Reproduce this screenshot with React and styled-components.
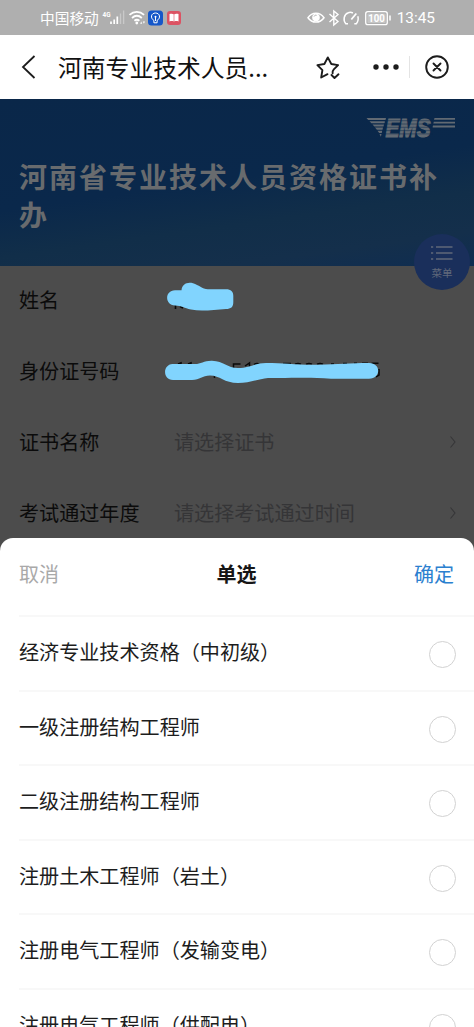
import React, { useState } from 'react';
import styled, { createGlobalStyle } from 'styled-components';

const GlobalStyle = createGlobalStyle`
  * {
    box-sizing: border-box;
  }
  body {
    margin: 0;
    background: #fff;
    font-family: "Noto Sans CJK SC", "Noto Sans", sans-serif;
  }
`;

const Screen = styled.div`
  width: 474px;
  height: 1027px;
  overflow: hidden;
  display: flex;
  flex-direction: column;
  background: #4c4c4c;
`;

const StatusBar = styled.div`
  height: 35px;
  flex: none;
  display: flex;
  align-items: center;
  justify-content: space-between;
  padding: 1px 39px 0 40px;
  background: #afafaf;
  color: #fff;
`;

const StatusGroup = styled.div`
  display: flex;
  align-items: center;

  svg {
    display: block;
  }
`;

const Carrier = styled.span`
  font-size: 14.7px;
  line-height: 20px;
`;

const Clock = styled.span`
  margin-left: 6px;
  font-family: Roboto, sans-serif;
  font-size: 15.4px;
  line-height: 20px;
`;

const NavBar = styled.div`
  height: 64px;
  flex: none;
  display: flex;
  align-items: center;
  padding: 0 25px 0 21px;
  background: #fff;
  color: #1c1c1c;
`;

const NavTitle = styled.div`
  flex: 1;
  margin-left: 22px;
  font-size: 23.8px;
  line-height: 34px;
  white-space: nowrap;
  color: #111;
`;

const NavIcon = styled.svg`
  display: block;
  flex: none;
  margin-left: ${(p) => p.$left || 0}px;
`;

const NavDivider = styled.div`
  width: 1px;
  height: 22px;
  margin-left: 10px;
  background: #e4e4e4;
`;

const Hero = styled.div`
  position: relative;
  height: 167px;
  flex: none;
  padding: 17px 16px 0 19px;
  background: linear-gradient(172deg, #0a2749 0%, #0a284b 48%, #112e49 68%, #142f4b 85%, #0f2d51 100%);
`;

const Logo = styled.svg`
  display: block;
  margin: 0 2px 0 auto;
  overflow: visible;
`;

const HeroTitle = styled.h1`
  margin: 17px 0 0;
  font-size: 28px;
  line-height: 38px;
  letter-spacing: 2px;
  font-weight: 700;
  color: #686b6e;
  word-break: break-all;
`;

// floats over the boundary of the hero and the form
const MenuButton = styled.button`
  position: absolute;
  right: 4px;
  bottom: -24px;
  width: 56px;
  height: 56px;
  padding: 0;
  border: 0;
  border-radius: 50%;
  display: flex;
  flex-direction: column;
  align-items: center;
  justify-content: center;
  gap: 4px;
  background: #1a2f5b;
  color: #60687a;
  font-family: inherit;
  font-size: 10.5px;
  line-height: 15px;
`;

const Form = styled.div`
  flex: none;
  height: 272px;
  background: #4c4c4c;
`;

const FormRow = styled.div`
  height: 71.2px;
  padding: 0 17px 4px 19px;
  display: flex;
  align-items: center;
  font-size: 20.1px;
  line-height: 28px;
`;

const Label = styled.div`
  width: 155px;
  flex: none;
  color: #0b0b0b;
`;

const Placeholder = styled.div`
  flex: 1;
  color: #353537;
`;

const Scribble = styled.svg`
  display: block;
  flex: none;
  margin: 1px 0 0 -12px;
`;

const SheetWrap = styled.div`
  flex: 1;
  min-height: 0;
  display: flex;
  flex-direction: column;
  background: #4c4c4c;
`;

const Sheet = styled.div`
  flex: 1;
  min-height: 0;
  overflow: hidden;
  border-radius: 13px 13px 0 0;
  background: #fff;
`;

const SheetHeader = styled.div`
  height: 77px;
  padding: 0 20px 5px 19px;
  display: grid;
  grid-template-columns: 1fr auto 1fr;
  align-items: center;
  font-size: 20px;
  line-height: 28px;
`;

const SheetTitle = styled.div`
  font-weight: 700;
  color: #161616;
`;

const SheetAction = styled.button`
  padding: 0;
  border: 0;
  background: none;
  font: inherit;
  text-align: ${(p) => (p.$primary ? 'right' : 'left')};
  color: ${(p) => (p.$primary ? '#2b80cf' : '#a9a9a9')};
`;

const OptionRow = styled.div`
  height: 74.5px;
  margin-left: 19px;
  padding: 0 18px 0 0;
  border-top: 2px solid #f8f8f8;
  display: flex;
  align-items: center;
  justify-content: space-between;
  font-size: 20.1px;
  line-height: 28px;
  color: #1d1d1d;
`;

const OptionText = styled.span`
  padding-bottom: 2px;
`;

const Radio = styled.span`
  width: 27px;
  height: 27px;
  margin-top: 3px;
  border: ${(p) => (p.$checked ? '8px solid #2b80cf' : '1.5px solid #d2d2d2')};
  border-radius: 50%;
`;

const options = [
  '经济专业技术资格（中初级）',
  '一级注册结构工程师',
  '二级注册结构工程师',
  '注册土木工程师（岩土）',
  '注册电气工程师（发输变电）',
  '注册电气工程师（供配电）',
];

function SignalIcons() {
  return (
    <svg width="84" height="20" viewBox="98 8 84 20" fill="none">
      <text x="101.5" y="17" fontSize="8" fontWeight="700" fontFamily="Roboto" fill="#fff" textLength="8" lengthAdjust="spacingAndGlyphs">4G</text>
      <path d="M110 21.5v2.5M113.2 19.5v4.5M116.3 16.5v7.5" stroke="#fff" strokeWidth="1.7" />
      <path d="M119.5 13.5v10.5M122.6 10.5v13.5" stroke="#c9c9c9" strokeWidth="1.3" />
      <path d="M128.5 14.8c4.4-4 10.2-4 14.6 0M131 18c3-2.7 6.8-2.7 9.8 0M133.4 20.8c1.6-1.3 3.4-1.3 5 0" stroke="#fff" strokeWidth="1.8" />
      <circle cx="135.8" cy="23" r="1.4" fill="#fff" />
      <path d="M139.2 23.7l1-2.2 1 2.2zM141.8 21.5h2.2l-1.1 2.2z" fill="#fff" />
      <rect x="147" y="10.5" width="15" height="15" rx="3.5" fill="#1557c9" />
      <path d="M152.9 20.4c-3.9-2.2-2.9-7.4 1.6-7.4s5.5 5.200 1.600 7.400v2.400h-3.200z" stroke="#fff" strokeWidth="1" />
      <path d="M154.500 17v4" stroke="#fff" strokeWidth="1" />
      <circle cx="154.500" cy="16.700" r="1" fill="#fff" />
      <rect x="166" y="11" width="14" height="14" rx="3" fill="#dc5363" />
      <path d="M168.500 14c1.800-.5 3.200-.5 4.200.2v7.300c-1.200-.5-2.600-.5-4.200-.1zM177.500 14c-1.800-.5-3.200-.5-4.200.2v7.300c1.200-.5 2.600-.5 4.200-.1z" fill="#fff" />
    </svg>
  );
}

function DeviceIcons() {
  return (
    <svg width="86" height="20" viewBox="306 8 86 20" fill="none" stroke="#fff">
      <path d="M309 17.700c4-5.800 12-5.800 16 0-4 5.800-12 5.800-16 0z" strokeWidth="1.500" />
      <circle cx="317" cy="17.500" r="3.800" fill="#fff" stroke="none" />
      <path d="M315 16.500c.6-1.200 1.600-1.500 2.600-1.200" stroke="#afafaf" strokeWidth="1" />
      <path d="M330.500 14l8.500 7.500-4.200 3.500v-14l4.200 3.500-8.500 7.500" strokeWidth="1.400" />
      <path d="M349 23.700h-2.200c-3-3.400-2-9.500 2.500-11 1.600-.6 3.200-.4 4.600.3M358.800 16.200c.8 2.600.3 5.400-1.500 7.500h-2" strokeWidth="1.500" />
      <path d="M352.300 19.500l5-6" strokeWidth="1.800" />
      <rect x="366.700" y="11.700" width="21.600" height="13" rx="2.200" strokeWidth="1.300" />
      <rect x="368.400" y="13.400" width="18.200" height="9.600" rx="1" fill="#c6c6c6" stroke="none" />
      <path d="M391 15.500v5" strokeWidth="1.500" />
      <text x="369.300" y="22" fontSize="10.500" fontWeight="700" fontFamily="Roboto" fill="#fff" stroke="none" textLength="16.500" lengthAdjust="spacingAndGlyphs">100</text>
    </svg>
  );
}

function EmsLogo() {
  return (
    <Logo width="90" height="24" viewBox="366 116 90 24">
      <g fill="#626a73">
        <path d="M366.500 118H386l-.5 2.100h-17.300zM369.500 121.200h15.500l-.5 2.100h-13.100zM372.500 124.400h11.500l-.5 2.100h-9.100zM375 127.600h8l-.5 2.100h-5.600zM377.500 130.800h4.700l-.4 2.100h-2.600zM379.500 134h2l-.6 2.700z" />
        <text x="385.500" y="137" fontFamily="Liberation Sans" fontSize="26" fontWeight="700" fontStyle="italic" textLength="45" lengthAdjust="spacingAndGlyphs" stroke="#626a73" strokeWidth="1.200">EMS</text>
        <path d="M434.500 118H455v1.800h-21zM433.800 121.800H455v1.800h-21.700zM433 125.600h22v1.800h-22.600z" />
      </g>
      <path d="M384 120.700h49M384 124h49M384 127.300h49M384 130.600h49M384 133.900h49" stroke="#0a284b" strokeWidth=".8" opacity=".6" />
    </Logo>
  );
}

function ListIcon() {
  return (
    <svg width="22" height="16" viewBox="0 0 22 16" stroke="#60687a" strokeWidth="1.400">
      <path d="M0 2h2.200M5 2h16.500M0 8h2.200M5 8h16.500M0 14h2.200M5 14h16.500" />
    </svg>
  );
}

function Chevron() {
  return (
    <svg width="8" height="14" viewBox="0 0 8 14" fill="none" stroke="#363638" strokeWidth="1.100">
      <path d="M1.500 1.500L6 7l-4.500 5.500" />
    </svg>
  );
}

function NameScribble() {
  return (
    <Scribble width="76" height="36" viewBox="162 282 76 36">
      <path d="M175.500 305v4M180 306.500l3 1.500" stroke="#090909" strokeWidth="1.600" />
      <path
        d="M175 290.200H181.500C182 284.500 187 281.700 193 283.300C199 285 202 289.200 208 289.200H226C231 289.200 233.300 291.500 233.300 296V302C233.300 307 231 309 226 309C214 309.500 202 312 191 309.500C184 308 182 305.700 175 305.500C164.500 305.500 164.500 290.200 175 290.200Z"
        fill="#81d4fe"
      />
    </Scribble>
  );
}

function IdScribble() {
  return (
    <Scribble width="222" height="36" viewBox="162 354 222 36">
      <path
        d="M178 365l3-1.200v2M188 365l3-1.200v2M214.500 376v3M233.500 371v-6h7M245 367l4.500-3v5M254 365.500q3-2 6 0M283 364.500h8M295 365.200q3-1.500 6 0M306 365.200q3-1.500 6 0M317 365.200q3-1.500 6 0M331 365h3M343 364.500h4M354 364.300h3M362 364.300h6M371.500 364.300h7M379 370v6l-3 2"
        fill="none"
        stroke="#090909"
        strokeWidth="1.500"
      />
      <path
        d="M172.500 365H195C201 365 204 361.500 212 361.700C224 362 227 369 238 369C250 369 255 364 266 364C284 364 296 366 318 365.700C338 365.300 350 364 369 364C381.500 364 381 379.500 369 379.700H331C306 378 290 379.500 268 379C258 380 249 384 238 384C224 384 220 376.500 210 376.500C202 376.500 200 381 192 381H173C162.500 381 162.500 365.500 172.500 365Z"
        fill="#81d4fe"
      />
    </Scribble>
  );
}

function App() {
  const [selected, setSelected] = useState(null);

  return (
    <Screen>
      <GlobalStyle />
      <StatusBar>
        <StatusGroup>
          <Carrier>中国移动</Carrier>
          <SignalIcons />
        </StatusGroup>
        <StatusGroup>
          <DeviceIcons />
          <Clock>13:45</Clock>
        </StatusGroup>
      </StatusBar>

      <NavBar>
        <NavIcon width="15" height="26" viewBox="0 0 15 26" fill="none" stroke="currentColor" strokeWidth="1.800">
          <path d="M13.500 2L2 13l11.500 11" />
        </NavIcon>
        <NavTitle>河南专业技术人员...</NavTitle>
        {/* star with a small check at its lower right */}
        <NavIcon width="24" height="26" viewBox="316 54 24 26" fill="none" stroke="currentColor" strokeWidth="1.900" strokeLinejoin="round" strokeLinecap="round">
          <path d="M327.500 74.200l-6.300 3.300 1.200-7.400-5-5 7-1.100 3.400-6.600 3.500 6.600 6.800 1.100-4.300 4.300c-1.200 1.300-1.500 2.300-1.200 4" />
          <path d="M331.500 75l3 3 4-3.700" />
        </NavIcon>
        <NavIcon $left={33} width="26" height="8" viewBox="0 0 26 8" fill="currentColor">
          <circle cx="3" cy="4" r="2.700" />
          <circle cx="13" cy="4" r="2.700" />
          <circle cx="23" cy="4" r="2.700" />
        </NavIcon>
        <NavDivider />
        <NavIcon $left={15} width="24" height="24" viewBox="0 0 24 24" fill="none" stroke="currentColor" strokeWidth="1.900" strokeLinecap="round">
          <circle cx="12" cy="12" r="10.800" />
          <path d="M8.500 8.500l7 7M15.500 8.500l-7 7" />
        </NavIcon>
      </NavBar>

      <Hero>
        <EmsLogo />
        <HeroTitle>河南省专业技术人员资格证书补办</HeroTitle>
        <MenuButton>
          <ListIcon />
          菜单
        </MenuButton>
      </Hero>

      <Form>
        <FormRow>
          <Label>姓名</Label>
          <NameScribble />
        </FormRow>
        <FormRow>
          <Label>身份证号码</Label>
          <IdScribble />
        </FormRow>
        <FormRow>
          <Label>证书名称</Label>
          <Placeholder>请选择证书</Placeholder>
          <Chevron />
        </FormRow>
        <FormRow>
          <Label>考试通过年度</Label>
          <Placeholder>请选择考试通过时间</Placeholder>
          <Chevron />
        </FormRow>
      </Form>

      <SheetWrap>
        <Sheet>
          <SheetHeader>
            <SheetAction>取消</SheetAction>
            <SheetTitle>单选</SheetTitle>
            <SheetAction $primary>确定</SheetAction>
          </SheetHeader>
          {options.map((name) => (
            <OptionRow key={name} onClick={() => setSelected(name)}>
              <OptionText>{name}</OptionText>
              <Radio $checked={selected === name} />
            </OptionRow>
          ))}
        </Sheet>
      </SheetWrap>
    </Screen>
  );
}

export default App;
